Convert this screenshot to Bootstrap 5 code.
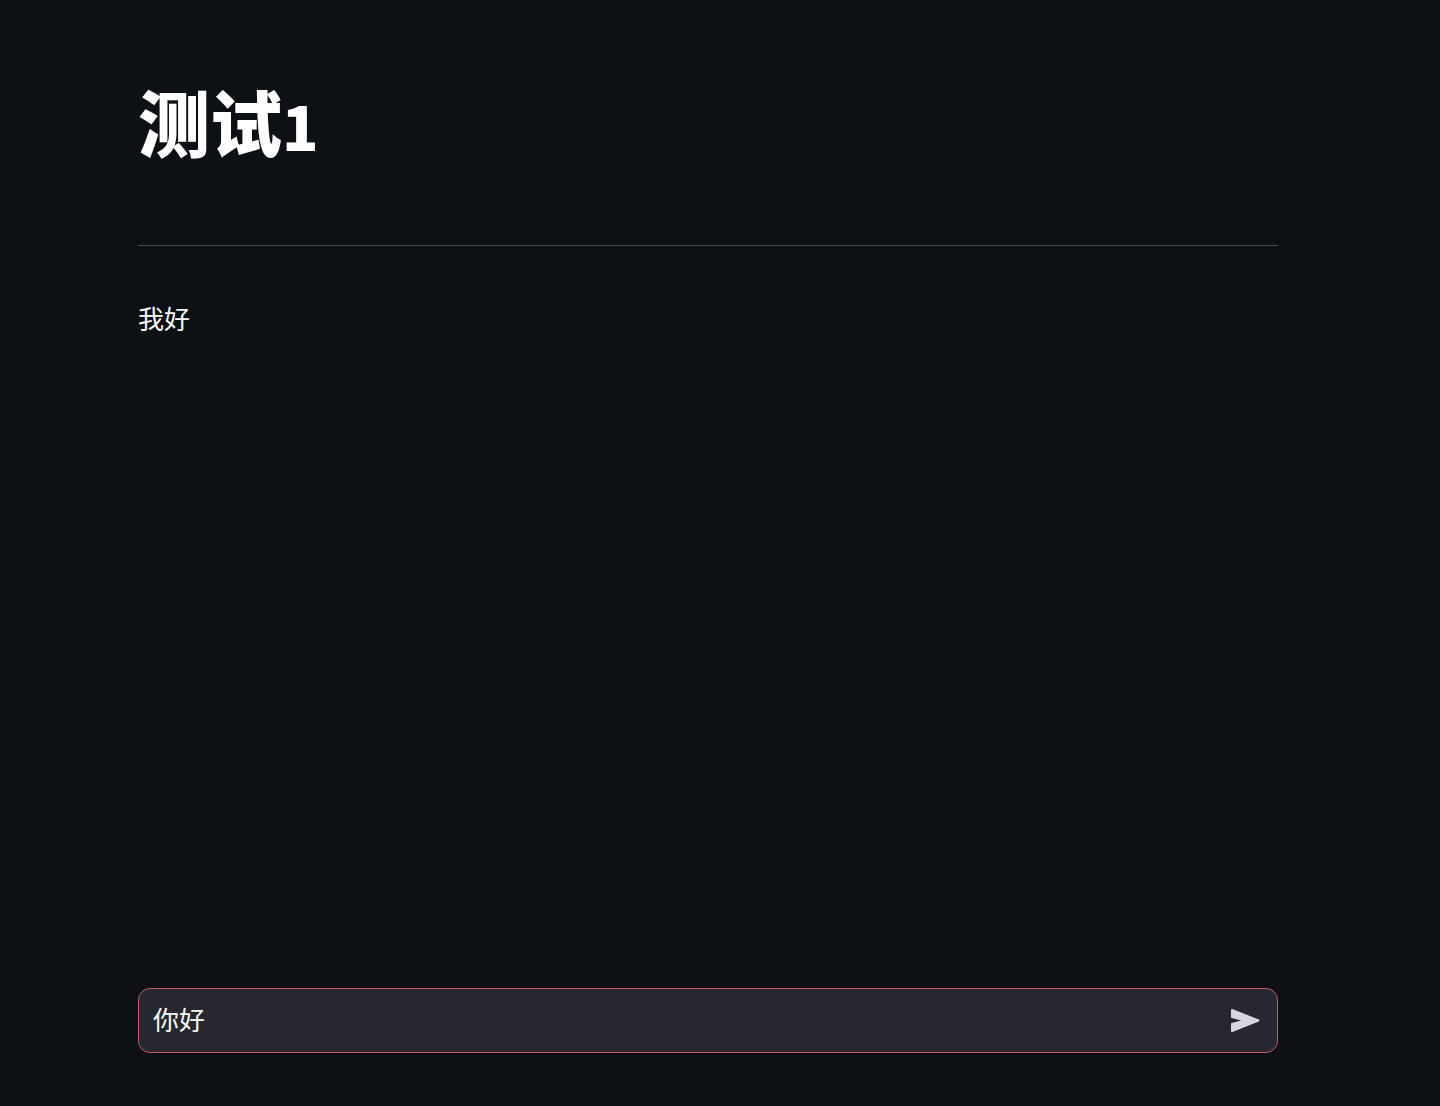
<!DOCTYPE html>
<html lang="zh">
<head>
<meta charset="utf-8">
<title>测试1</title>
<link href="https://cdn.jsdelivr.net/npm/bootstrap@5.3.0/dist/css/bootstrap.min.css" rel="stylesheet">
<style>
html,body{height:100%}
body{background:#0d1116;color:#fafafa;font-family:"Noto Sans CJK SC",sans-serif}
.app-shell{width:1140px;height:1106px;margin-left:138px}
.page-title{font-size:72px;font-weight:900;line-height:84px;margin:0;padding-top:78px;height:245px;color:#fff;font-family:"Noto Sans CJK SC",sans-serif;letter-spacing:0}
.title-num{font-size:60px;letter-spacing:-1px}
.page-rule{margin:0;border:0;border-top:1px solid #484b53;opacity:1}
.reply-text{font-size:26px;line-height:36px;margin:0;padding-top:54px}
.chat-box{height:65px;margin-bottom:53px;background:#262730;border:1px solid #c9596a;border-radius:12px;padding:0 17px 0 14px}
.chat-text{font-size:26px;line-height:36px;color:#fafafa;margin-top:-3px}
.send-btn{background:none;border:0;padding:0;line-height:0}
</style>
</head>
<body>
<div class="app-shell d-flex flex-column">
<h1 class="page-title">测试<span class="title-num">1</span></h1>
<hr class="page-rule">
<p class="reply-text flex-grow-1">我好</p>
<div class="chat-box d-flex align-items-center justify-content-between">
<span class="chat-text">你好</span>
<button class="send-btn" type="button" aria-label="发送"><svg width="30" height="26" viewBox="0 0 30 26"><path fill="#d6d7e0" stroke="#d6d7e0" stroke-width="2" stroke-linejoin="round" d="M2 2 28.5 12.5 2 23 2 16 15 12.5 2 9Z"/></svg></button>
</div>
</div>
<script src="https://cdn.jsdelivr.net/npm/bootstrap@5.3.0/dist/js/bootstrap.bundle.min.js"></script>
</body>
</html>
